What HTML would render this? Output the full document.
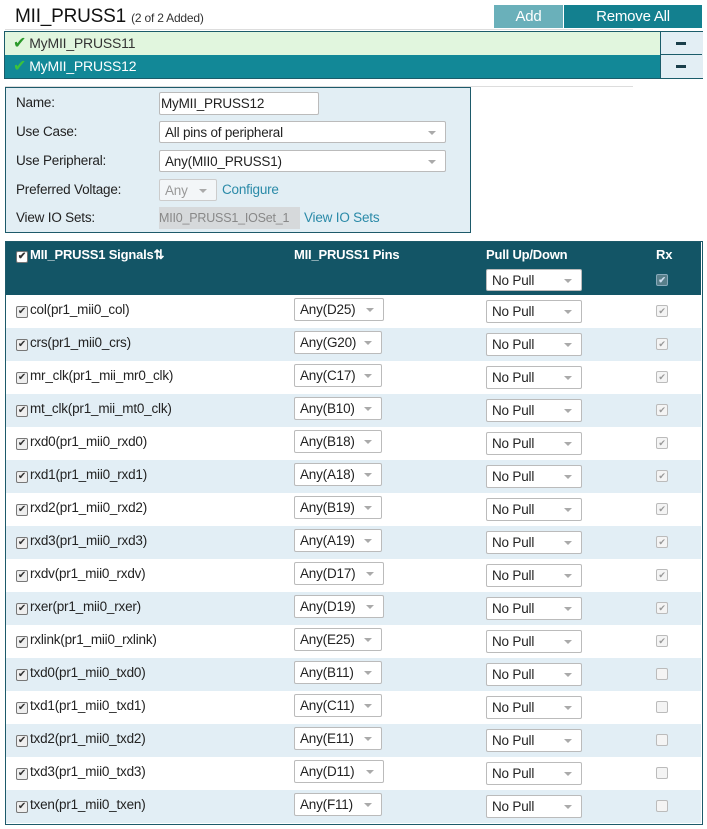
<!DOCTYPE html>
<html><head><style>
body{margin:0;width:707px;height:829px;background:#fff;font-family:"Liberation Sans",sans-serif;font-size:13.5px;color:#222;position:relative;overflow:hidden;letter-spacing:-0.2px}
.a{position:absolute}
.sel{position:absolute;background:#fff;border:1px solid #bbb;border-radius:2px;height:22px;line-height:22px;padding-left:5px;box-sizing:border-box;font-size:13.5px;color:#222}
.sel:after{content:"";position:absolute;right:9px;top:9px;border-left:4px solid transparent;border-right:4px solid transparent;border-top:4px solid #aaa}
.n:after{display:none}
.cb{display:inline-block;width:10px;height:10px;border:1px solid #777;background:#eee;border-radius:2px;vertical-align:0px;margin-right:2px;position:relative;font-size:10px;line-height:10px;text-align:center}
.cb:before{content:"✔";color:#333}
.row{position:absolute;left:6px;width:695px;height:33px}
.rx{position:absolute;left:650px;top:10px;width:10px;height:10px;border:1px solid #bbb;border-radius:2px;background:#f4f4f4;font-size:9px;line-height:10px;text-align:center;color:#999}
</style></head><body>
<div class="a" style="left:15px;top:6px;font-size:19px;color:#111">MII_PRUSS1 <span style="font-size:12px;color:#333">(2 of 2 Added)</span></div>
<div class="a" style="left:494px;top:5px;width:69px;height:23px;background:#6ab0ba;color:#fff;text-align:center;line-height:23px;font-size:15px">Add</div>
<div class="a" style="left:564px;top:5px;width:138px;height:23px;background:#13808f;color:#fff;text-align:center;line-height:23px;font-size:15px">Remove All</div>
<div class="a" style="left:5px;top:29px;width:628px;height:1px;background:#ddd"></div>
<div class="a" style="left:4px;top:31px;width:697px;height:46px;border:1px solid #1b5c6a"></div>
<div class="a" style="left:5px;top:32px;width:655px;height:23px;background:#e1f6de;line-height:23px;color:#333;font-size:14px"><span style="color:#2b9a2b;margin:0 3px 0 8px;font-size:16px">✔</span>MyMII_PRUSS11</div>
<div class="a" style="left:5px;top:55px;width:655px;height:23px;background:#128897;line-height:23px;color:#fff;font-size:14px"><span style="color:#3cc23c;margin:0 3px 0 8px;font-size:16px">✔</span>MyMII_PRUSS12</div>
<div class="a" style="left:660px;top:32px;width:42px;height:46px;background:#e3eef4;border-left:1px solid #1b5c6a"></div>
<div class="a" style="left:660px;top:54px;width:42px;height:1px;background:#1b5c6a"></div>
<div class="a" style="left:676px;top:42px;width:10px;height:3px;background:#1a3e4a"></div>
<div class="a" style="left:676px;top:65px;width:10px;height:3px;background:#1a3e4a"></div>
<div class="a" style="left:5px;top:86px;width:628px;height:1px;background:#ddd"></div>
<div class="a" style="left:5px;top:87px;width:464px;height:144px;background:#e2eef4;border:1px solid #1d5a6a"></div>
<div class="a" style="left:16px;top:95px">Name:</div>
<div class="a" style="left:16px;top:124px">Use Case:</div>
<div class="a" style="left:16px;top:153px">Use Peripheral:</div>
<div class="a" style="left:16px;top:182px">Preferred Voltage:</div>
<div class="a" style="left:16px;top:210px">View IO Sets:</div>
<div class="sel n" style="left:159px;top:92px;width:160px;height:23px;padding-left:1px">MyMII_PRUSS12</div>
<div class="sel" style="left:159px;top:121px;width:287px">All pins of peripheral</div>
<div class="sel" style="left:159px;top:150px;width:287px">Any(MII0_PRUSS1)</div>
<div class="sel" style="left:159px;top:179px;width:58px;color:#999;background:#f3f6f8;border-color:#ccc">Any</div>
<div class="a" style="left:222px;top:182px;color:#2a8aa8">Configure</div>
<div class="a" style="left:159px;top:207px;width:141px;height:22px;background:#d6d9db;color:#888;line-height:22px;font-size:12.5px;overflow:hidden;white-space:nowrap">MII0_PRUSS1_IOSet_1</div>
<div class="a" style="left:304px;top:210px;color:#2a8aa8">View IO Sets</div>
<div class="a" style="left:5px;top:241px;width:696px;height:582px;border:1px solid #1d5a6a"></div>
<div class="a" style="left:6px;top:242px;width:695px;height:53px;background:#135566;color:#fff;font-weight:bold;font-size:13px">
<div class="a" style="left:10px;top:5px"><span class="cb" style="background:#fff"></span>MII_PRUSS1 Signals⇅</div>
<div class="a" style="left:288px;top:5px">MII_PRUSS1 Pins</div>
<div class="a" style="left:480px;top:5px">Pull Up/Down</div>
<div class="a" style="left:650px;top:5px">Rx</div>
<div class="sel" style="left:480px;top:27px;width:96px;font-weight:normal">No Pull</div>
<div class="rx" style="top:32px;background:#587f8a;border-color:#8ab;color:#cde">✔</div>
</div>
<div id="rows"></div>
<script>
var d=[["col(pr1_mii0_col)","D25",1],["crs(pr1_mii0_crs)","G20",1],["mr_clk(pr1_mii_mr0_clk)","C17",1],["mt_clk(pr1_mii_mt0_clk)","B10",1],["rxd0(pr1_mii0_rxd0)","B18",1],["rxd1(pr1_mii0_rxd1)","A18",1],["rxd2(pr1_mii0_rxd2)","B19",1],["rxd3(pr1_mii0_rxd3)","A19",1],["rxdv(pr1_mii0_rxdv)","D17",1],["rxer(pr1_mii0_rxer)","D19",1],["rxlink(pr1_mii0_rxlink)","E25",1],["txd0(pr1_mii0_txd0)","B11",0],["txd1(pr1_mii0_txd1)","C11",0],["txd2(pr1_mii0_txd2)","E11",0],["txd3(pr1_mii0_txd3)","D11",0],["txen(pr1_mii0_txen)","F11",0]];
var h="";d.forEach(function(r,i){h+='<div class="row" style="top:'+(295+i*33)+'px;background:'+(i%2?'#e2eef5':'#fff')+'"><div class="a" style="left:10px;top:7px"><span class="cb"></span>'+r[0]+'</div><div class="sel" style="left:288px;top:3px;width:'+(r[1][0]=='D'?90:88)+'px;height:23px">Any('+r[1]+')</div><div class="sel" style="left:480px;top:5px;width:96px;height:23px">No Pull</div><div class="rx">'+(r[2]?'✔':'')+'</div></div>';});
document.getElementById("rows").innerHTML=h;
</script>
</body></html>
